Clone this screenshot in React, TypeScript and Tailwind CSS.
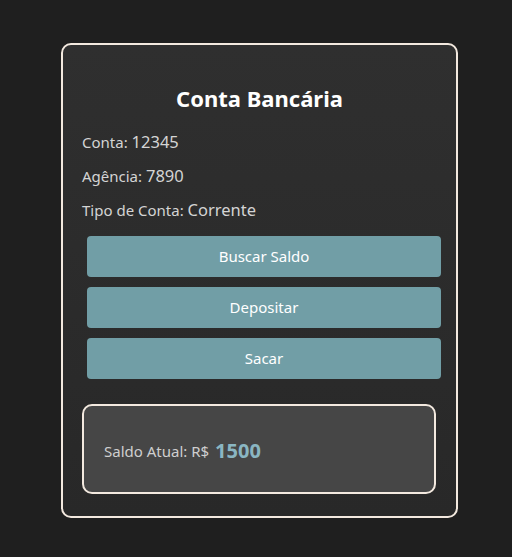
export default function App() {
  const font = { fontFamily: '"Noto Sans", "Open Sans", sans-serif' };
  return (
    <div className="min-h-[557px] w-full bg-[#1f1f1f] pt-[43px]" style={font}>
      <div className="ml-[61px] w-[397px] h-[475px] rounded-[10px] border-2 border-[#f3e9df] bg-gradient-to-b from-[#2f2f2f] to-[#282828] px-[19px] pt-[38px]">
        <h2 className="h-[30px] text-center text-[22px] font-bold leading-[30px] text-white">
          Conta Bancária
        </h2>
        <div className="mt-[12px] flex flex-col">
          <div className="flex h-[34px] items-center text-[15px] text-[#d4d4d4]">
            Conta:&nbsp;<span className="text-[16.5px]">12345</span>
          </div>
          <div className="flex h-[34px] items-center text-[15px] text-[#d4d4d4]">
            Agência:&nbsp;<span className="text-[16.5px]">7890</span>
          </div>
          <div className="flex h-[34px] items-center text-[15px] text-[#d4d4d4]">
            Tipo de Conta:&nbsp;<span className="text-[16.5px]">Corrente</span>
          </div>
        </div>
        <div className="mt-[9px] ml-[5px] flex w-[354px] flex-col gap-[10px]">
          {["Buscar Saldo", "Depositar", "Sacar"].map((label) => (
            <button
              key={label}
              className="h-[41px] w-full rounded-[4px] bg-[#719ea6] text-[15px] text-white"
            >
              {label}
            </button>
          ))}
        </div>
        <div className="mt-[25px] flex h-[90px] w-[354px] items-center rounded-[10px] border-2 border-[#f3e9df] bg-[#464646] pl-[20px] pt-[4px]">
          <span className="text-[15px] text-[#cfcfcf]">Saldo Atual: R$</span>
          <span className="ml-[6px] text-[20px] font-bold text-[#8ab6c2]">1500</span>
        </div>
      </div>
    </div>
  );
}
